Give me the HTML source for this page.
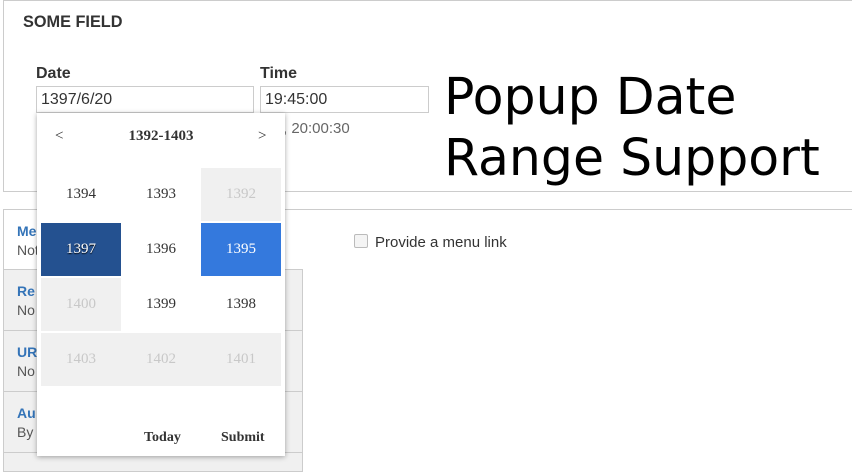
<!DOCTYPE html>
<html><head><style>
body{margin:0;width:852px;height:465px;overflow:hidden;background:#fff;font-family:"Liberation Sans",sans-serif;color:#333;position:relative}
.a{position:absolute}
.top{left:3px;top:0;width:860px;height:192px;border:1px solid #ccc;box-sizing:border-box}
.lbl{font-weight:bold;font-size:16px}
.inp{height:27px;border:1px solid #ccc;box-sizing:border-box;font-size:16px;padding:2px 4px;line-height:21px}
.tab{left:3px;width:300px;border:1px solid #ccc;box-sizing:border-box;background:#f0f0f0;font-size:14px;padding:0 0 0 13px;line-height:19px;color:#555}
.tab b{color:#3474b8;display:block;margin-top:12px}
.pop{left:37px;top:113px;width:248px;height:343px;background:#fff;box-shadow:0 1px 5px rgba(0,0,0,.35);font-family:"Liberation Serif",serif;font-size:15px}
.c{position:absolute;width:80px;height:53px;line-height:53px;text-align:center}
.g{background:#f0f0f0;color:#c8c8c8}
</style></head><body>
<div class="a top"></div>
<div class="a lbl" style="left:23px;top:13px;font-size:16.3px">SOME FIELD</div>
<div class="a lbl" style="left:36px;top:65px">Date</div>
<div class="a lbl" style="left:260px;top:65px">Time</div>
<div class="a inp" style="left:36px;top:86px;width:218px">1397/6/20</div>
<div class="a inp" style="left:260px;top:86px;width:169px">19:45:00</div>
<div class="a" style="left:283px;top:120px;font-size:15px;color:#666">, 20:00:30</div>
<div class="a" style="left:3px;top:209px;width:860px;border-top:1px solid #ccc;height:260px;border-left:1px solid #ccc"></div>
<div class="a tab" style="top:209px;height:61px;background:#fff;border-right:none"><b>Me</b>Not</div>
<div class="a tab" style="top:269px;height:62px"><b>Re</b>No</div>
<div class="a tab" style="top:330px;height:62px"><b>UR</b>No</div>
<div class="a tab" style="top:391px;height:62px"><b>Au</b>By</div>
<div class="a tab" style="top:452px;height:20px"></div>
<div class="a" style="left:354px;top:234px;width:12px;height:12px;border:1px solid #bbb;border-radius:2px;background:#f4f4f4"></div>
<div class="a" style="left:375px;top:234px;font-size:15px">Provide a menu link</div>
<div class="a" style="left:444px;top:66px;font-family:'DejaVu Sans',sans-serif;font-size:50.5px;line-height:61px;color:#000">Popup Date<br>Range Support</div>
<div class="a pop">
<div class="a" style="left:18px;top:15px;font-size:15px">&lt;</div>
<div class="a" style="left:0;width:248px;text-align:center;top:15px;font-weight:bold;font-size:15px">1392-1403</div>
<div class="a" style="left:221px;top:15px;font-size:15px">&gt;</div>
<div class="c" style="left:4px;top:55px">1394</div>
<div class="c" style="left:84px;top:55px">1393</div>
<div class="c g" style="left:164px;top:55px">1392</div>
<div class="c" style="left:4px;top:110px;background:#245190;color:#fff;text-shadow:0 1px 1px #000">1397</div>
<div class="c" style="left:84px;top:110px">1396</div>
<div class="c" style="left:164px;top:110px;background:#3479dd;color:#fff">1395</div>
<div class="c g" style="left:4px;top:165px">1400</div>
<div class="c" style="left:84px;top:165px">1399</div>
<div class="c" style="left:164px;top:165px">1398</div>
<div class="c g" style="left:4px;top:220px">1403</div>
<div class="c g" style="left:84px;top:220px">1402</div>
<div class="c g" style="left:164px;top:220px">1401</div>
<div class="a" style="left:107px;top:317px;font-weight:bold;font-size:14px">Today</div>
<div class="a" style="left:184px;top:317px;font-weight:bold;font-size:14px">Submit</div>
</div>
</body></html>
